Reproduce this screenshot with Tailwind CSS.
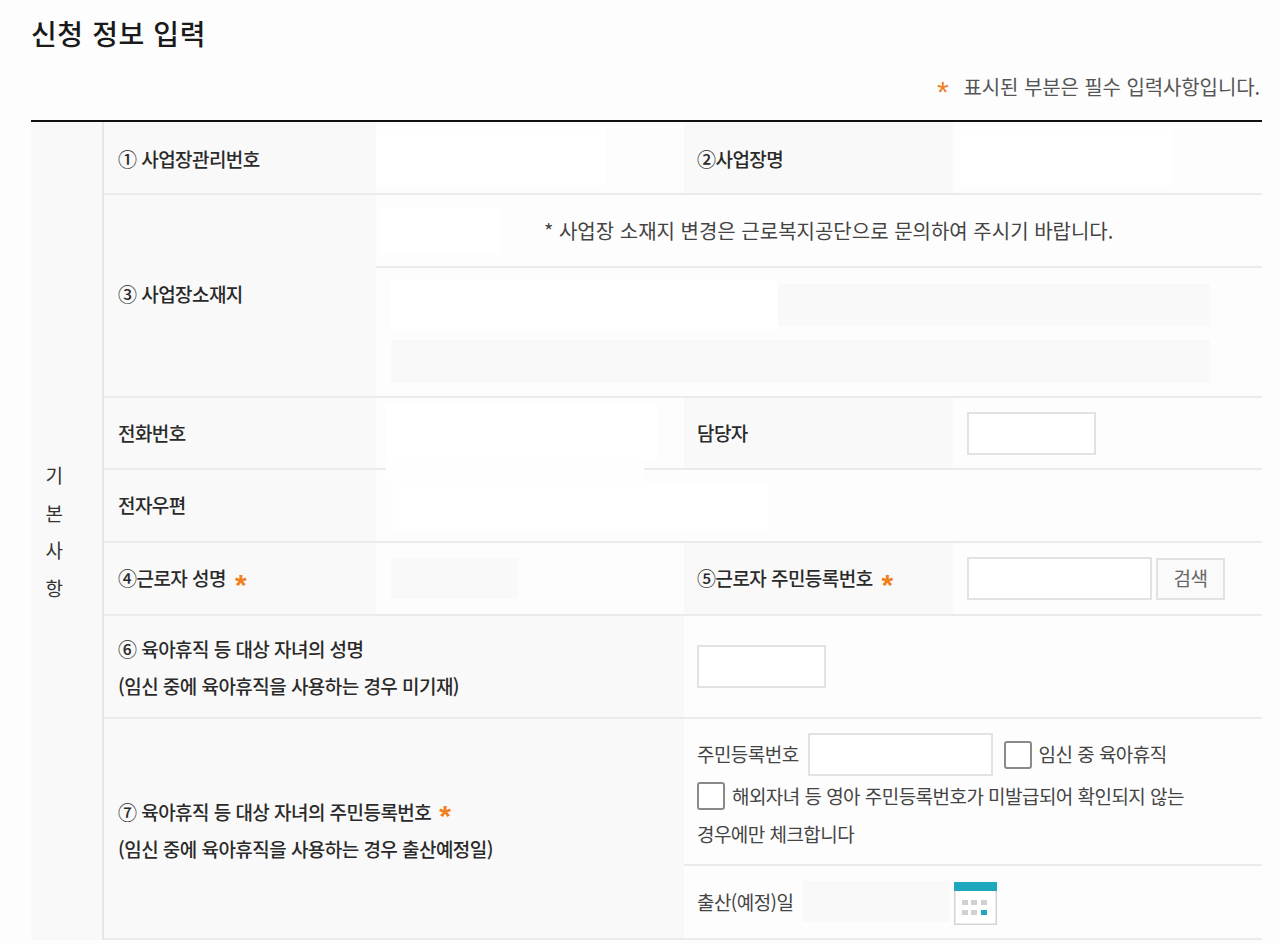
<!DOCTYPE html>
<html lang="ko">
<head>
<meta charset="utf-8">
<script src="https://cdn.jsdelivr.net/npm/@tailwindcss/browser@4"></script>
</head>
<body class="w-[1280px] h-[944px] overflow-hidden bg-[#fdfdfd] font-['Noto_Sans_CJK_KR','Noto_Sans',sans-serif] text-[19px] text-[#444] tracking-[-0.55px]">
<div class="pl-[31px] w-[1262px]">
  <h1 class="h-[70px] pt-[10px] text-[28px] leading-[46px] font-medium text-[#1a1a1a] tracking-[0.6px]">신청 정보 입력</h1>
  <p class="h-[50px] pb-[16px] flex items-center justify-end pr-[2px] text-[20px] text-[#555] tracking-[-0.1px]"><span class="font-['Liberation_Sans'] text-[#f07f1e] text-[30px] mr-[15px] leading-none translate-y-[5px]">*</span>표시된 부분은 필수 입력사항입니다.</p>

  <div class="border-t-2 border-[#111] flex">
    <div class="w-[73px] shrink-0 bg-[#f9f9f9] border-r-2 border-[#e6e6e6] flex flex-col items-center justify-center pr-[25px] text-[19px] leading-[37.5px] text-[#333]">
      <span>기</span><span>본</span><span>사</span><span>항</span>
    </div>
    <div class="flex-1 min-w-0 font-medium text-[#2a2a2a]">

      <div class="h-[73px] flex border-b-2 border-[#ebebeb]">
        <div class="w-[272px] bg-[#f9f9f9] pl-[14px] flex items-center pt-[3px]">① 사업장관리번호</div>
        <div class="w-[308px] flex items-center"><div class="w-[230px] h-[57px] bg-white"></div></div>
        <div class="w-[269px] bg-[#f9f9f9] pl-[13px] flex items-center pt-[3px]">②사업장명</div>
        <div class="flex-1 flex items-center pl-[7px]"><div class="w-[212px] h-[57px] bg-white"></div></div>
      </div>

      <div class="h-[203px] flex border-b-2 border-[#ebebeb]">
        <div class="w-[272px] bg-[#f9f9f9] pl-[14px] flex items-center pb-[2px]">③ 사업장소재지</div>
        <div class="flex-1 min-w-0 font-normal text-[#444]">
          <div class="h-[73px] flex items-center border-b-2 border-[#ebebeb] pl-[5px]">
            <div class="w-[120px] h-[47px] bg-white mr-[43px]"></div>
            <span class="text-[20px] tracking-[0px]">* 사업장 소재지 변경은 근로복지공단으로 문의하여 주시기 바랍니다.</span>
          </div>
          <div class="pl-[14px] pt-[12px]">
            <div class="flex items-center w-[820px]">
              <div class="w-[388px] h-[50px] bg-white shrink-0"></div>
              <div class="flex-1 h-[42px] bg-[#f9f9f9]"></div>
            </div>
            <div class="w-[819px] ml-[1px] h-[43px] mt-[10px] bg-[#f9f9f9]"></div>
          </div>
        </div>
      </div>

      <div class="h-[72px] flex border-b-2 border-[#ebebeb] relative">
        <div class="w-[272px] bg-[#f9f9f9] pl-[14px] flex items-center">전화번호</div>
        <div class="w-[308px] pl-[10px] pt-[5px]"><div class="w-[272px] h-[57px] bg-white"></div></div>
        <div class="w-[269px] bg-[#f9f9f9] pl-[13px] flex items-center">담당자</div>
        <div class="flex-1 flex items-center pl-[14px]"><div class="w-[129px] h-[43px] border-2 border-[#e2e2e2] bg-white"></div></div>
        <div class="absolute left-[282px] top-[62px] w-[258px] h-[22px] bg-[#fefefe]"></div>
      </div>

      <div class="h-[73px] flex border-b-2 border-[#ebebeb]">
        <div class="w-[272px] bg-[#f9f9f9] pl-[14px] flex items-center">전자우편</div>
        <div class="flex-1 pl-[17px] pt-[12px] relative"><div class="w-[375px] h-[48px] bg-white"></div></div>
      </div>

      <div class="h-[73px] flex border-b-2 border-[#ebebeb]">
        <div class="w-[272px] bg-[#f9f9f9] pl-[14px] flex items-center">④근로자 성명<span class="font-['Liberation_Sans'] text-[#f07f1e] text-[30px] font-bold ml-[9px] leading-none translate-y-[6px]">*</span></div>
        <div class="w-[308px] flex items-center pl-[15px]"><div class="w-[127px] h-[41px] bg-[#f9f9f9]"></div></div>
        <div class="w-[269px] bg-[#f9f9f9] pl-[13px] flex items-center">⑤근로자 주민등록번호<span class="font-['Liberation_Sans'] text-[#f07f1e] text-[30px] font-bold ml-[9px] leading-none translate-y-[6px]">*</span></div>
        <div class="flex-1 flex items-center pl-[14px] gap-[4px]">
          <div class="w-[185px] h-[43px] border-2 border-[#e2e2e2] bg-white"></div>
          <div class="w-[69px] h-[42px] border-2 border-[#e2e2e2] bg-[#fafafa] flex items-center justify-center font-normal text-[#666]">검색</div>
        </div>
      </div>

      <div class="h-[103px] flex border-b-2 border-[#ebebeb]">
        <div class="w-[580px] bg-[#f9f9f9] pl-[14px] flex flex-col justify-center leading-[37px]">
          <span>⑥ 육아휴직 등 대상 자녀의 성명</span>
          <span>(임신 중에 육아휴직을 사용하는 경우 미기재)</span>
        </div>
        <div class="flex-1 flex items-center pl-[13px] pb-[1px]"><div class="w-[129px] h-[43px] border-2 border-[#e2e2e2] bg-white"></div></div>
      </div>

      <div class="h-[221px] flex border-b-2 border-[#ebebeb]">
        <div class="w-[580px] bg-[#f9f9f9] pl-[14px] flex flex-col justify-center leading-[37px] pt-[2px]">
          <span class="flex items-center">⑦ 육아휴직 등 대상 자녀의 주민등록번호<span class="font-['Liberation_Sans'] text-[#f07f1e] text-[30px] font-bold ml-[8px] leading-none translate-y-[5px]">*</span></span>
          <span>(임신 중에 육아휴직을 사용하는 경우 출산예정일)</span>
        </div>
        <div class="flex-1 min-w-0 font-normal text-[#444]">
          <div class="h-[147px] border-b-2 border-[#ebebeb] pl-[13px] pt-[14px]">
            <div class="flex items-center h-[43px]">
              <span>주민등록번호</span>
              <div class="w-[185px] h-[43px] border-2 border-[#e2e2e2] bg-white ml-[9px]"></div>
              <div class="w-[28px] h-[28px] rounded-[3px] border-2 border-[#8a8a8a] bg-white ml-[11px] mt-[1px]"></div>
              <span class="ml-[7px]">임신 중 육아휴직</span>
            </div>
            <div class="flex items-center h-[28px] mt-[6px]">
              <div class="w-[28px] h-[28px] rounded-[3px] border-2 border-[#8a8a8a] bg-white"></div>
              <span class="ml-[7px]">해외자녀 등 영아 주민등록번호가 미발급되어 확인되지 않는</span>
            </div>
            <div class="mt-[9px] leading-[30px]">경우에만 체크합니다</div>
          </div>
          <div class="h-[72px] flex items-center pl-[13px]">
            <span class="w-[106px]">출산(예정)일</span>
            <div class="w-[146px] h-[41px] bg-[#f9f9f9] -mt-[2px]"></div>
            <svg class="ml-[5px] mt-[2px]" width="43" height="43" viewBox="0 0 43 43">
              <rect x="0.75" y="0.75" width="41.5" height="41.5" fill="#fff" stroke="#d4d4d4" stroke-width="1.5"/>
              <rect x="0" y="0" width="43" height="9" fill="#1fa7bd"/>
              <g fill="#d0d0d0">
                <rect x="8" y="18" width="6" height="5"/><rect x="17" y="18" width="6" height="5"/><rect x="27" y="18" width="6" height="5"/>
                <rect x="8" y="28" width="6" height="5"/><rect x="17" y="28" width="6" height="5"/>
              </g>
              <rect x="27" y="28" width="6" height="5" fill="#1fa7bd"/>
            </svg>
          </div>
        </div>
      </div>

    </div>
  </div>
</div>
</body>
</html>
